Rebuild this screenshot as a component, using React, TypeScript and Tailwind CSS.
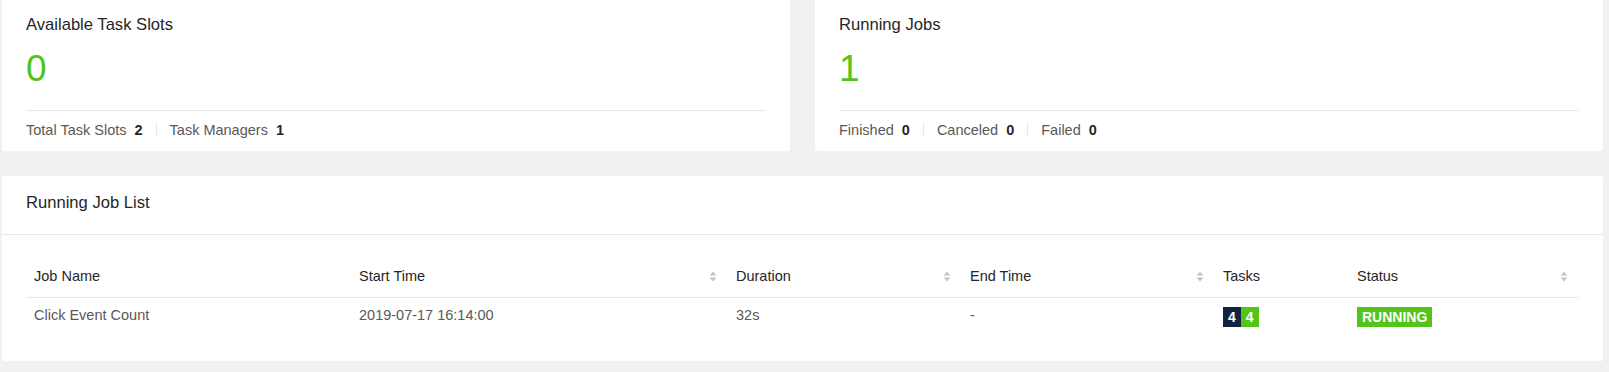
import React from "react";

const font = { fontFamily: '"Liberation Sans", Arial, sans-serif' };

function SortIcon() {
  return (
    <svg width="8" height="11" viewBox="0 0 8 11" className="mr-[3px] shrink-0">
      <path d="M4 0.5 L7.5 4.5 H0.5 Z" fill="#c4c4c4" />
      <path d="M0.5 6.5 H7.5 L4 10.5 Z" fill="#c4c4c4" />
    </svg>
  );
}

function Stat({ label, value }: { label: string; value: string }) {
  return (
    <span className="flex items-center">
      <span className="text-[#595959]">{label}</span>
      <span className="ml-2 font-bold text-[#262626]">{value}</span>
    </span>
  );
}

function Sep() {
  return <span className="mx-[13px] h-[14px] w-px bg-[#e8e8e8]" />;
}

function SummaryCard({
  title,
  value,
  stats,
}: {
  title: string;
  value: string;
  stats: { label: string; value: string }[];
}) {
  return (
    <div className="h-[151px] rounded-b-[2px] bg-white px-6">
      <div className="pt-[14px] text-[16.6px] leading-[22px] text-[#262626]">{title}</div>
      <div className="mt-[11px] text-[37px] leading-[44px] text-[#52c41a]">{value}</div>
      <div className="mt-[19px] border-t border-[#e8e8e8]" />
      <div className="flex items-center pt-2 text-[14.5px] leading-[22px]">
        {stats.map((s, i) => (
          <React.Fragment key={s.label}>
            {i > 0 && <Sep />}
            <Stat label={s.label} value={s.value} />
          </React.Fragment>
        ))}
      </div>
    </div>
  );
}

const cols = "grid grid-cols-[325px_377px_234px_253px_134px_230px]";

const headers: { name: string; sort: boolean }[] = [
  { name: "Job Name", sort: false },
  { name: "Start Time", sort: true },
  { name: "Duration", sort: true },
  { name: "End Time", sort: true },
  { name: "Tasks", sort: false },
  { name: "Status", sort: true },
];

export default function App() {
  return (
    <div className="h-[372px] w-[1609px] bg-[#f1f1f1] pl-[2px] pr-[6px]" style={font}>
      <div className="grid grid-cols-2 gap-[25px]">
        <SummaryCard
          title="Available Task Slots"
          value="0"
          stats={[
            { label: "Total Task Slots", value: "2" },
            { label: "Task Managers", value: "1" },
          ]}
        />
        <SummaryCard
          title="Running Jobs"
          value="1"
          stats={[
            { label: "Finished", value: "0" },
            { label: "Canceled", value: "0" },
            { label: "Failed", value: "0" },
          ]}
        />
      </div>

      <div className="mt-[25px] h-[185px] rounded-[2px] bg-white">
        <div className="h-[59px] border-b border-[#e8e8e8] px-6 pt-4 text-[16.6px] leading-[22px] text-[#262626]">
          Running Job List
        </div>
        <div className="px-6 pt-5 text-[14.5px]">
          <div className={`${cols} border-b border-[#e8e8e8] py-[10px] leading-[22px] text-[#262626]`}>
            {headers.map((h) => (
              <div key={h.name} className="flex items-center justify-between px-2">
                <span>{h.name}</span>
                {h.sort && <SortIcon />}
              </div>
            ))}
          </div>
          <div className={`${cols} py-[6px] leading-[22px] text-[#595959]`}>
            <div className="px-2">Click Event Count</div>
            <div className="px-2">2019-07-17 16:14:00</div>
            <div className="px-2">32s</div>
            <div className="px-2">-</div>
            <div className="flex px-2 pt-[3px] text-sm">
              <span className="h-5 bg-[#10233f] px-[5px] font-bold leading-5 text-white">4</span>
              <span className="h-5 bg-[#52c41a] px-[5px] font-bold leading-5 text-white">4</span>
            </div>
            <div className="flex px-2 pt-[3px] text-sm">
              <span className="h-5 bg-[#52c41a] px-[5px] font-bold leading-5 text-white">RUNNING</span>
            </div>
          </div>
        </div>
      </div>
    </div>
  );
}
